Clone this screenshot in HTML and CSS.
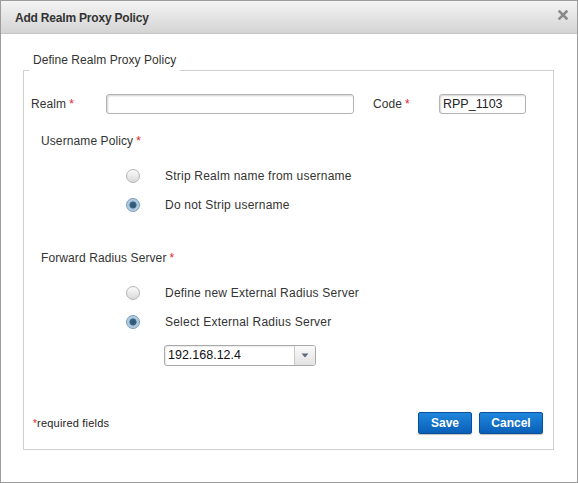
FILE: index.html
```html
<!DOCTYPE html>
<html>
<head>
<meta charset="utf-8">
<title>Add Realm Proxy Policy</title>
<link rel="stylesheet" href="styles.css">
</head>
<body>
<div class="dialog">
  <div class="dialog-header">
    <span class="dialog-title">Add Realm Proxy Policy</span>
    <span class="close" aria-label="Close">
      <svg width="10" height="10" viewBox="0 0 10 10"><path d="M1.5 1.5 L8.5 8.5 M8.5 1.5 L1.5 8.5" stroke="#8a8a8a" stroke-width="2.6" stroke-linecap="square"/></svg>
    </span>
  </div>
  <fieldset class="panel">
    <legend class="panel-legend">Define Realm Proxy Policy</legend>
    <div class="row-top">
      <label class="lbl lbl-realm">Realm<span class="req">*</span></label>
      <input class="txt txt-realm" type="text" value="">
      <label class="lbl lbl-code">Code<span class="req">*</span></label>
      <input class="txt txt-code" type="text" value="RPP_1103">
    </div>

    <div class="group-label group-first">Username Policy<span class="req">*</span></div>
    <div class="options">
      <div class="option"><span class="radio"></span><span class="opt-text">Strip Realm name from username</span></div>
      <div class="option"><span class="radio checked"></span><span class="opt-text">Do not Strip username</span></div>
    </div>

    <div class="group-label group-second">Forward Radius Server<span class="req">*</span></div>
    <div class="options">
      <div class="option"><span class="radio"></span><span class="opt-text">Define new External Radius Server</span></div>
      <div class="option"><span class="radio checked"></span><span class="opt-text">Select External Radius Server</span></div>
    </div>

    <div class="select">
      <span class="select-value">192.168.12.4</span>
      <span class="select-arrow"><svg width="8" height="5" viewBox="0 0 8 5"><path d="M0.5 0.5 H7.5 L4 4.5 Z" fill="#5b6b7c"/></svg></span>
    </div>

    <div class="footer">
      <div class="note"><span class="req">*</span>required fields</div>
      <div class="buttons">
        <button class="btn btn-save">Save</button>
        <button class="btn btn-cancel">Cancel</button>
      </div>
    </div>
  </fieldset>
</div>
</body>
</html>
```

FILE: styles.css
```css
html, body {
  margin: 0;
  padding: 0;
  background: #ffffff;
}

body {
  font-family: "Liberation Sans", Arial, sans-serif;
  font-size: 12px;
  color: #333333;
}

.dialog {
  width: 578px;
  height: 483px;
  box-sizing: border-box;
  border: 1px solid #9c9c9c;
  background: #ffffff;
  overflow: hidden;
}

.dialog-header {
  height: 33px;
  box-sizing: border-box;
  border-bottom: 1px solid #c4c4c4;
  background: linear-gradient(#f4f4f4, #d4d4d4);
  display: flex;
  align-items: center;
  justify-content: space-between;
  padding: 0 9px 0 14px;
}

.dialog-title {
  font-weight: bold;
  font-size: 12px;
  letter-spacing: -0.2px;
  color: #333333;
  padding-top: 2px;
}

.close {
  display: flex;
  align-items: center;
  margin-top: -4px;
}

.panel {
  margin: 19px 23px 0 22px;
  padding: 0 0 15px 0;
  border: 1px solid #cfcfcf;
  min-width: 0;
}

.panel-legend {
  margin-left: 5px;
  padding: 0 4px 20px 4px;
  line-height: 14px;
  font-size: 12px;
  letter-spacing: 0.05px;
  color: #333333;
}

.req {
  color: #e8202a;
  margin-left: 3px;
}

.row-top {
  display: flex;
  align-items: center;
  height: 20px;
  margin-top: 7px;
  padding-left: 7px;
}

.lbl {
  line-height: 14px;
  letter-spacing: 0.1px;
}

.lbl-realm {
  width: 75px;
}

.lbl-code {
  width: 66px;
  margin-left: 19px;
}

.txt {
  box-sizing: border-box;
  height: 20px;
  border: 1px solid #b3b3b3;
  border-radius: 3px;
  box-shadow: inset 1px 1px 2px rgba(0, 0, 0, 0.18);
  font-family: "Liberation Sans", Arial, sans-serif;
  font-size: 12.5px;
  color: #222222;
  padding: 0 3px;
  margin: 0;
  background: #ffffff;
}

.txt-realm {
  width: 248px;
}

.txt-code {
  width: 87px;
}

.group-label {
  line-height: 14px;
  padding-left: 17px;
  letter-spacing: 0.1px;
}

.group-first {
  margin-top: 20px;
}

.group-second {
  margin-top: 32px;
}

.options {
  margin-top: 13px;
  padding-left: 102px;
}

.option {
  height: 29px;
  display: flex;
  align-items: center;
}

.radio {
  width: 14px;
  height: 14px;
  box-sizing: border-box;
  border-radius: 50%;
  border: 1px solid #b4b4b4;
  background: linear-gradient(#fbfbfb, #d9d9d9);
  margin-right: 25px;
  flex: none;
}

.radio.checked {
  border: 1px solid #7b99b4;
  background: radial-gradient(circle at 50% 50%, #2f5570 0, #3a6482 3.2px, #a9c6dd 3.9px, #c5d9ea 100%);
}

.opt-text {
  line-height: 14px;
  letter-spacing: 0.22px;
}

.select {
  margin: 9px 0 0 140px;
  width: 152px;
  height: 21px;
  box-sizing: border-box;
  border: 1px solid #a9a9a9;
  border-radius: 3px;
  display: flex;
  background: #ffffff;
  box-shadow: inset 1px 1px 1px rgba(0, 0, 0, 0.08);
}

.select-value {
  flex: 1;
  line-height: 19px;
  padding-left: 3px;
  font-size: 12.5px;
  color: #111111;
}

.select-arrow {
  width: 20px;
  border-left: 1px solid #c8c8c8;
  background: linear-gradient(#fafafa, #e2e2e2);
  border-radius: 0 2px 2px 0;
  display: flex;
  align-items: center;
  justify-content: center;
}

.footer {
  display: flex;
  align-items: center;
  justify-content: space-between;
  margin-top: 46px;
  padding: 0 10px 0 9px;
  height: 22px;
}

.note {
  font-size: 11px;
  letter-spacing: 0.2px;
  color: #222222;
}

.note .req {
  margin-left: 0;
  font-size: 10px;
}

.buttons {
  display: flex;
  gap: 7px;
}

.btn {
  height: 22px;
  box-sizing: border-box;
  border: 1px solid #0b4e99;
  border-radius: 2px;
  background: linear-gradient(#1f86dc, #0a5fb8);
  color: #ffffff;
  font-family: "Liberation Sans", Arial, sans-serif;
  font-weight: bold;
  font-size: 12px;
  padding: 0;
  margin: 0;
  box-shadow: 0 1px 1px rgba(0, 0, 0, 0.25);
}

.btn-save {
  width: 54px;
}

.btn-cancel {
  width: 64px;
}
```
